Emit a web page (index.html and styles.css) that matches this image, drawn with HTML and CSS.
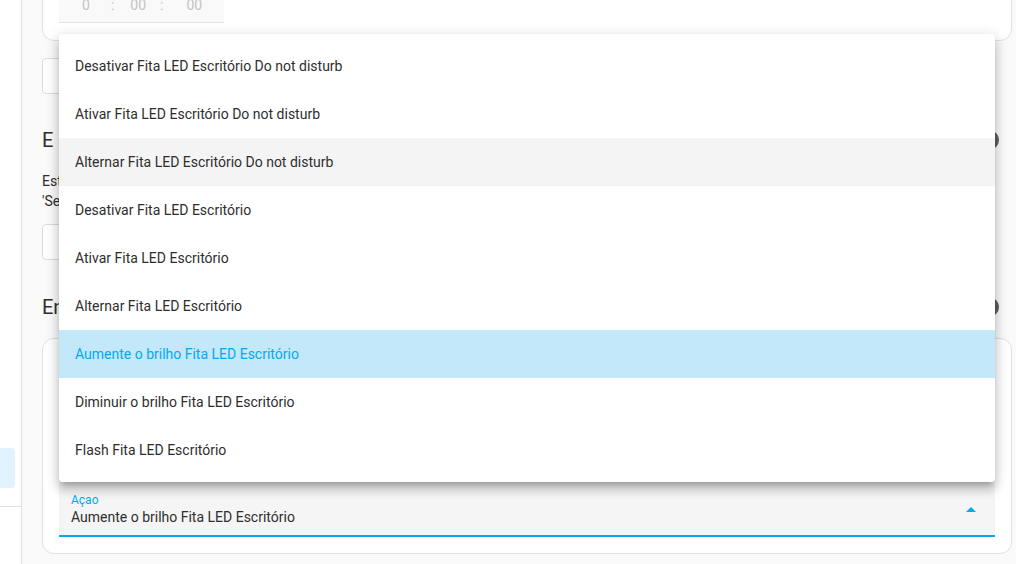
FILE: index.html
```html
<!DOCTYPE html>
<html lang="pt-BR">
<head>
  <meta charset="UTF-8">
  <meta name="viewport" content="width=device-width, initial-scale=1.0">
  <title>Automação</title>
  <link rel="stylesheet" href="styles.css">
</head>
<body>
  <div class="app">
    <aside class="sidebar">
      <ul class="nav">
        <li></li><li></li><li></li><li></li><li></li><li></li>
        <li></li><li></li><li></li><li></li>
        <li class="active"></li>
      </ul>
      <div class="nav-divider"></div>
    </aside>

    <main class="main">
      <div class="content">
        <!-- card do gatilho (rolado para cima) -->
        <div class="card card-trigger">
          <div class="time-input">
            <span class="t-h">0</span>
            <span class="t-sep1">:</span>
            <span class="t-m">00</span>
            <span class="t-sep2">:</span>
            <span class="t-s">00</span>
          </div>
        </div>

        <div class="btn-outline">Adicionar gatilho</div>

        <div class="section-head">
          <h2>E se (opcional)</h2>
          <svg class="help" viewBox="0 0 24 24"><path d="M15.07,11.25L14.17,12.17C13.45,12.89 13,13.5 13,15H11V14.5C11,13.39 11.45,12.39 12.17,11.67L13.41,10.41C13.78,10.05 14,9.55 14,9C14,7.89 13.1,7 12,7A2,2 0 0,0 10,9H8A4,4 0 0,1 12,5A4,4 0 0,1 16,9C16,9.88 15.64,10.67 15.07,11.25M13,19H11V17H13M12,2A10,10 0 0,0 2,12A10,10 0 0,0 12,22A10,10 0 0,0 22,12C22,6.47 17.5,2 12,2Z"/></svg>
        </div>
        <p class="section-desc">Estas condições são opcionais e impedirão a execução das ações, a menos que todas sejam atendidas. <a href="#">Saiba mais sobre condições</a><br>'Se' a automação tiver condições, elas serão verificadas após o gatilho.</p>

        <div class="btn-outline">Adicionar condição</div>

        <div class="section-head head-actions">
          <h2>Então faça</h2>
          <svg class="help" viewBox="0 0 24 24"><path d="M15.07,11.25L14.17,12.17C13.45,12.89 13,13.5 13,15H11V14.5C11,13.39 11.45,12.39 12.17,11.67L13.41,10.41C13.78,10.05 14,9.55 14,9C14,7.89 13.1,7 12,7A2,2 0 0,0 10,9H8A4,4 0 0,1 12,5A4,4 0 0,1 16,9C16,9.88 15.64,10.67 15.07,11.25M13,19H11V17H13M12,2A10,10 0 0,0 2,12A10,10 0 0,0 12,22A10,10 0 0,0 22,12C22,6.47 17.5,2 12,2Z"/></svg>
        </div>

        <div class="card card-action">
          <div class="card-header">Tipo de ação: Dispositivo</div>
          <div class="field field-device">
            <span class="field-label">Dispositivo</span>
            <span class="field-value">Fita LED Escritório</span>
          </div>

          <div class="field field-open">
            <span class="field-label">Açao</span>
            <span class="field-value">Aumente o brilho Fita LED Escritório</span>
            <span class="arrow-up"></span>

            <ul class="menu">
              <li>Desativar Fita LED Escritório Do not disturb</li>
              <li>Ativar Fita LED Escritório Do not disturb</li>
              <li class="hover">Alternar Fita LED Escritório Do not disturb</li>
              <li>Desativar Fita LED Escritório</li>
              <li>Ativar Fita LED Escritório</li>
              <li>Alternar Fita LED Escritório</li>
              <li class="selected">Aumente o brilho Fita LED Escritório</li>
              <li>Diminuir o brilho Fita LED Escritório</li>
              <li>Flash Fita LED Escritório</li>
            </ul>
          </div>
        </div>
      </div>
    </main>
  </div>
</body>
</html>
```

FILE: styles.css
```css
* {
  margin: 0;
  padding: 0;
  box-sizing: border-box;
  list-style: none;
}

html, body {
  height: 564px;
  overflow: hidden;
}

body {
  font-family: Roboto, "Noto Sans", sans-serif;
  font-size: 14px;
  color: #2e2e2e;
  background: #fafafa;
}

.app {
  display: flex;
  height: 564px;
}

/* barra lateral recolhida */
.sidebar {
  width: 22px;
  flex-shrink: 0;
  background: #fff;
  border-right: 1px solid #e0e0e0;
  overflow: hidden;
}

.nav {
  padding-top: 8px;
}

.nav li {
  width: 15px;
  height: 40px;
  margin-bottom: 4px;
  border-radius: 0 4px 4px 0;
}

.nav li.active {
  background: #e1f3fd;
  margin-bottom: 0;
}

.nav-divider {
  margin-top: 18px;
  border-top: 1px solid #e0e0e0;
}

.main {
  flex: 1;
  overflow: hidden;
}

.content {
  margin-top: -50px;
  padding: 0 4px 0 20px;
}

.card {
  background: #fff;
  border: 1px solid #e0e0e0;
  border-radius: 12px;
  padding: 16px;
}

.card-trigger {
  padding-bottom: 17px;
}

.time-input {
  display: flex;
  width: 165px;
  height: 56px;
  padding-top: 28px;
  line-height: 20px;
  background: #f9f9f9;
  border-bottom: 1px solid #e3e3e3;
  color: #c4c4c4;
}

.t-h { margin-left: 23px; }
.t-sep1 { margin-left: 21px; }
.t-m { margin-left: 16px; }
.t-sep2 { margin-left: 14px; }
.t-s { margin-left: 23px; }

.btn-outline {
  width: 180px;
  height: 36px;
  line-height: 34px;
  padding: 0 16px;
  margin-top: 17px;
  background: #fff;
  border: 1px solid #dcdcdc;
  border-radius: 4px;
  color: #03a9f4;
  font-weight: 500;
}

.section-head {
  display: flex;
  align-items: center;
  justify-content: space-between;
  height: 32px;
  margin-top: 30px;
  padding-right: 11px;
}

.section-head h2 {
  font-size: 20px;
  font-weight: 400;
  line-height: 32px;
}

.help {
  width: 24px;
  height: 24px;
  fill: #5f5f5f;
}

.section-desc {
  margin-top: 15px;
  line-height: 20px;
}

.section-desc a {
  color: #03a9f4;
  text-decoration: none;
}

.section-desc + .btn-outline {
  margin-top: 13px;
}

.head-actions {
  margin-top: 31px;
}

.card-action {
  margin-top: 15px;
  height: 216px;
}

.card-header {
  height: 40px;
  line-height: 40px;
}

.field {
  position: relative;
  height: 56px;
  padding: 12px 12px 0;
  background: #f5f5f5;
  border-radius: 4px 4px 0 0;
  border-bottom: 1px solid #8a8a8a;
}

.field-device {
  margin-top: 8px;
}

.field-open {
  margin-top: 22px;
  border-bottom: 2px solid #03a9f4;
}

.field-label {
  display: block;
  font-size: 12px;
  line-height: 14px;
  color: #757575;
}

.field-open .field-label {
  color: #03a9f4;
}

.field-value {
  display: block;
  line-height: 20px;
}

.arrow-up {
  position: absolute;
  right: 19px;
  top: 26px;
  border-left: 5px solid transparent;
  border-right: 5px solid transparent;
  border-bottom: 5px solid #03a9f4;
}

/* menu suspenso aberto */
.menu {
  position: absolute;
  left: 0;
  right: 0;
  bottom: 53px;
  z-index: 10;
  padding: 8px 0;
  background: #fff;
  border-radius: 4px;
  box-shadow: 0 5px 5px -3px rgba(0, 0, 0, .2),
              0 8px 10px 1px rgba(0, 0, 0, .14),
              0 3px 14px 2px rgba(0, 0, 0, .12);
}

.menu li {
  height: 48px;
  line-height: 48px;
  padding: 0 16px;
  color: #2e2e2e;
}

.menu li.hover {
  background: #f4f4f4;
}

.menu li.selected {
  background: #c2e8fa;
  color: #03a9f4;
}
```
